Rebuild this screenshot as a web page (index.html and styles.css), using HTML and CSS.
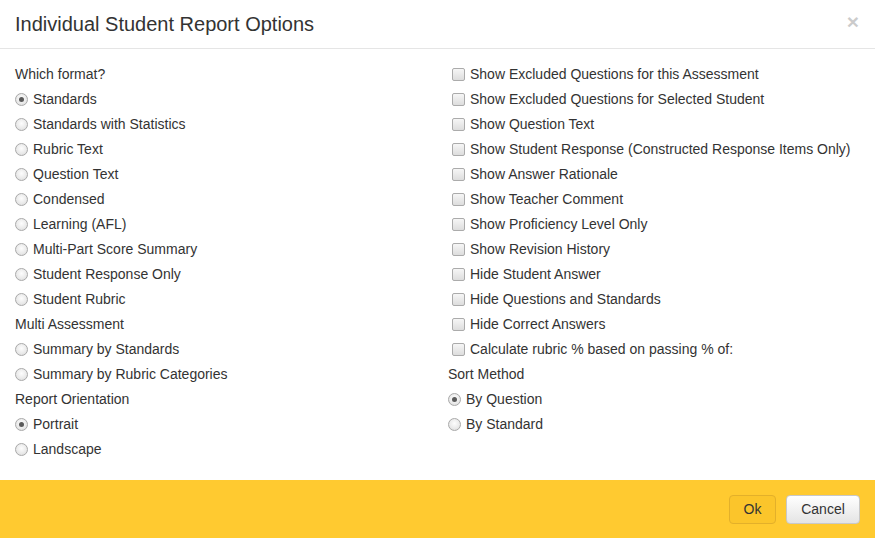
FILE: index.html
```html
<!DOCTYPE html>
<html>
<head>
<meta charset="utf-8">
<link rel="stylesheet" href="styles.css">
</head>
<body>
<div class="modal">
  <div class="header">
    <h4 class="title">Individual Student Report Options</h4>
    <span class="close">&times;</span>
  </div>
  <div class="body">
    <div class="col">
      <div class="row label">Which format?</div>
      <div class="row"><span class="radio checked"></span>Standards</div>
      <div class="row"><span class="radio"></span>Standards with Statistics</div>
      <div class="row"><span class="radio"></span>Rubric Text</div>
      <div class="row"><span class="radio"></span>Question Text</div>
      <div class="row"><span class="radio"></span>Condensed</div>
      <div class="row"><span class="radio"></span>Learning (AFL)</div>
      <div class="row"><span class="radio"></span>Multi-Part Score Summary</div>
      <div class="row"><span class="radio"></span>Student Response Only</div>
      <div class="row"><span class="radio"></span>Student Rubric</div>
      <div class="row label">Multi Assessment</div>
      <div class="row"><span class="radio"></span>Summary by Standards</div>
      <div class="row"><span class="radio"></span>Summary by Rubric Categories</div>
      <div class="row label">Report Orientation</div>
      <div class="row"><span class="radio checked"></span>Portrait</div>
      <div class="row"><span class="radio"></span>Landscape</div>
    </div>
    <div class="col">
      <div class="row cb"><span class="check"></span>Show Excluded Questions for this Assessment</div>
      <div class="row cb"><span class="check"></span>Show Excluded Questions for Selected Student</div>
      <div class="row cb"><span class="check"></span>Show Question Text</div>
      <div class="row cb"><span class="check"></span>Show Student Response (Constructed Response Items Only)</div>
      <div class="row cb"><span class="check"></span>Show Answer Rationale</div>
      <div class="row cb"><span class="check"></span>Show Teacher Comment</div>
      <div class="row cb"><span class="check"></span>Show Proficiency Level Only</div>
      <div class="row cb"><span class="check"></span>Show Revision History</div>
      <div class="row cb"><span class="check"></span>Hide Student Answer</div>
      <div class="row cb"><span class="check"></span>Hide Questions and Standards</div>
      <div class="row cb"><span class="check"></span>Hide Correct Answers</div>
      <div class="row cb"><span class="check"></span>Calculate rubric % based on passing % of:</div>
      <div class="row label">Sort Method</div>
      <div class="row"><span class="radio checked"></span>By Question</div>
      <div class="row"><span class="radio"></span>By Standard</div>
    </div>
  </div>
  <div class="footer">
    <button class="btn btn-ok">Ok</button>
    <button class="btn btn-cancel">Cancel</button>
  </div>
</div>
</body>
</html>
```
FILE: styles.css
```css
html, body {
  margin: 0;
  padding: 0;
  background: #fff;
}
body {
  font-family: "Liberation Sans", Arial, sans-serif;
  font-size: 14px;
  color: #333;
}
.modal {
  width: 875px;
  height: 538px;
  display: flex;
  flex-direction: column;
  background: #fff;
}
.header {
  height: 48px;
  border-bottom: 1px solid #e5e5e5;
  padding: 0 15px;
  display: flex;
  align-items: center;
  justify-content: space-between;
  box-sizing: content-box;
}
.title {
  margin: 0;
  font-size: 20px;
  font-weight: normal;
  color: #333;
  line-height: 24px;
}
.close {
  font-size: 21px;
  font-weight: bold;
  color: #000;
  opacity: 0.2;
  line-height: 1;
  margin-right: 1px;
  position: relative;
  top: -3px;
}
.body {
  flex: 1;
  padding: 13px 15px 18px;
  display: grid;
  grid-template-columns: 433px 1fr;
}
.row {
  height: 25px;
  line-height: 25px;
  display: flex;
  align-items: center;
  white-space: nowrap;
}
.row.cb {
  padding-left: 4px;
}
.radio {
  width: 11px;
  height: 11px;
  border-radius: 50%;
  border: 1px solid #a9a9a9;
  background: radial-gradient(circle at 50% 40%, #fdfdfd 0%, #e9e9e9 60%, #d6d6d6 100%);
  margin-right: 5px;
  position: relative;
  flex: none;
}
.radio.checked::after {
  content: "";
  position: absolute;
  left: 3px;
  top: 3px;
  width: 5px;
  height: 5px;
  border-radius: 50%;
  background: #5a5a5a;
}
.check {
  width: 11px;
  height: 11px;
  border-radius: 2px;
  border: 1px solid #ababab;
  background: linear-gradient(#f6f6f6, #dddddd);
  margin-right: 5px;
  flex: none;
}
.footer {
  height: 58px;
  background: #ffca30;
  display: flex;
  align-items: center;
  justify-content: flex-end;
  padding-right: 15px;
  gap: 10px;
}
.btn {
  font-family: "Liberation Sans", Arial, sans-serif;
  font-size: 14px;
  color: #333;
  height: 29px;
  border-radius: 4px;
  padding: 0;
  margin: 0;
  cursor: pointer;
}
.btn-ok {
  width: 47px;
  background: #fbc52b;
  border: 1px solid #e3b02a;
}
.btn-cancel {
  width: 74px;
  background: linear-gradient(#ffffff, #e4e4e4);
  border: 1px solid #c8c8c8;
}
```
